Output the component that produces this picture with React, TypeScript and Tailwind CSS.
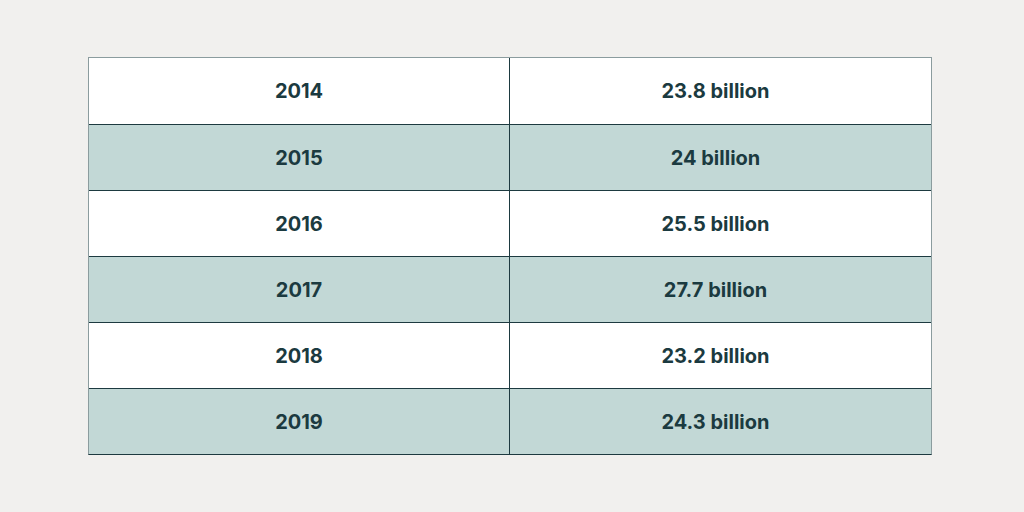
import React from 'react';

const rows = [
    { year: '2014', value: '23.8 billion' },
    { year: '2015', value: '24 billion' },
    { year: '2016', value: '25.5 billion' },
    { year: '2017', value: '27.7 billion' },
    { year: '2018', value: '23.2 billion' },
    { year: '2019', value: '24.3 billion' },
];

const App: React.FC = () => {
    return (
        <div className="w-[1024px] h-[512px] bg-[#f1f0ee] pt-[57px] pl-[88px]" style={{ fontFamily: 'Inter, "Liberation Sans", sans-serif' }}>
            <div className="w-[844px] border-l border-t border-r border-[#8b9c9e] border-b border-b-[#1d3a40]">
                {rows.map((row, i) => (
                    <div
                        key={row.year}
                        className={`grid grid-cols-2 ${i === 0 ? 'h-[66px]' : 'h-[66px] border-t border-[#1d3a40]'} ${i % 2 === 1 ? 'bg-[#c2d8d6]' : 'bg-white'}`}
                    >
                        <div className="flex items-center justify-center border-r border-[#1d3a40] text-[20px] font-bold text-[#1b3a40]">
                            {row.year}
                        </div>
                        <div className="flex items-center justify-center pr-[10px] text-[20px] font-bold text-[#1b3a40]">
                            {row.value}
                        </div>
                    </div>
                ))}
            </div>
        </div>
    );
};

export default App;
